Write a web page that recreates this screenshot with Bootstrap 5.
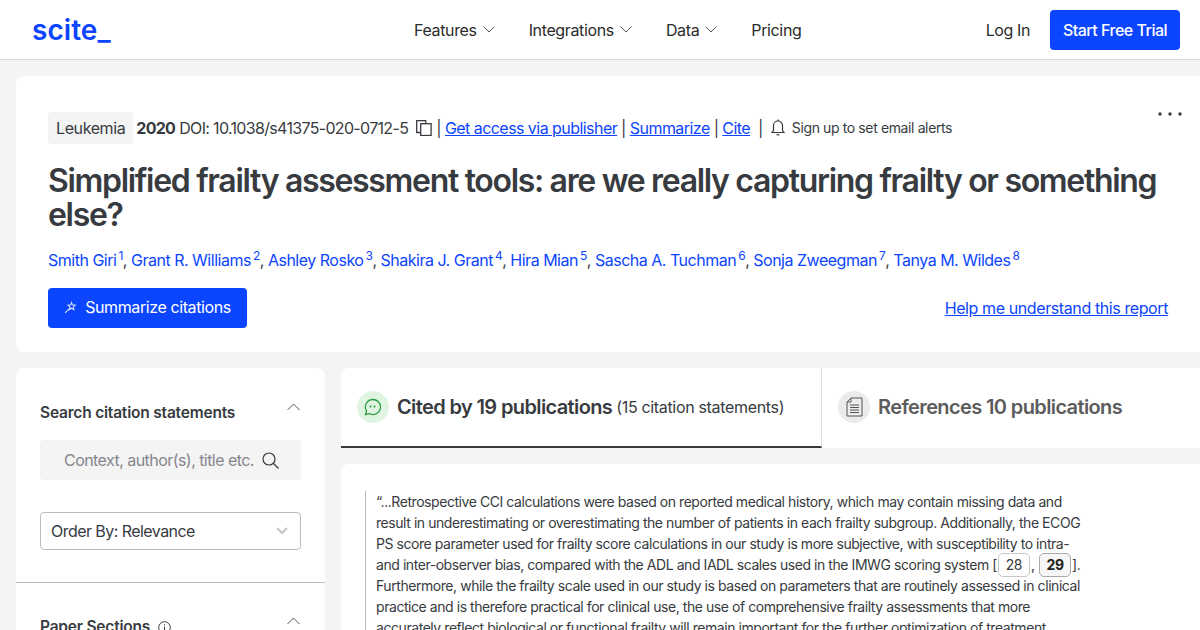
<!DOCTYPE html>
<html lang="en">
<head>
  <meta charset="UTF-8" />
  <meta name="viewport" content="width=device-width, initial-scale=1.0" />
  <title>scite report</title>
  <link rel="stylesheet" href="https://cdn.jsdelivr.net/npm/bootstrap@5.3.0/dist/css/bootstrap.min.css" />
  <style>
    html, body { height: 630px; overflow: hidden; }
    body { background: #f4f4f4; color: #373b40; font-family: Inter, "Liberation Sans", sans-serif; font-size: 16px; letter-spacing: -0.4px; }
    a { color: #0b45ff; }
    .site-nav { height: 60px; background: #fff; border-bottom: 1px solid #d9d9d9; padding: 0 20px 0 32px; }
    .logo { color: #0b45ff; font-size: 28px; font-weight: 600; letter-spacing: 0.05px; text-decoration: none; line-height: 1; width: 80px; white-space: nowrap; }
    .nav-items { gap: 34px; margin-left: 302px; letter-spacing: -0.36px; }
    .nav-items a { gap: 6px; }
    .nav-items a, .login { color: #2b2b2b; text-decoration: none; }
    .btn-scite { background: #0b45ff; color: #fff; border: 0; border-radius: 4px; font-weight: 500; font-size: 16px; letter-spacing: -0.5px; }
    .btn-scite:hover { background: #0b45ff; color: #fff; }
    .trial { height: 40px; width: 130px; padding: 0; }
    .head-card { background: #fff; margin: 16px 0 16px 16px; height: 276px; border-radius: 8px 0 0 8px; padding: 36px 32px 0; position: relative; }
    .meta { height: 32px; white-space: nowrap; }
    .journal { background: #f4f4f4; border-radius: 4px; padding: 0 8px; height: 32px; line-height: 32px; margin-right: 3px; }
    .year { letter-spacing: -0.7px; margin-right: 4px; }
    .doi { letter-spacing: -0.67px; }
    .links { letter-spacing: -0.55px; }
    .alerts { font-size: 14px; letter-spacing: -0.38px; margin: -2px 0 0 7px; }
    .more { position: absolute; top: 36px; right: 18px; }
    h1.title { font-size: 32px; line-height: 34px; font-weight: 600; letter-spacing: -1.32px; margin: 20px 0 0; color: #373b40; }
    .authors { margin-top: 16px; height: 24px; white-space: nowrap; letter-spacing: -0.49px; }
    .authors a { text-decoration: none; }
    .authors sup { font-size: 12px; color: #0b45ff; margin-left: 2px; }
    .summ { height: 40px; width: 199px; padding: 0 0 2px; font-weight: 400; letter-spacing: -0.4px; }
    .summ-row { margin-top: 16px; }
    .side { width: 309px; flex: none; background: #fff; border-radius: 8px; height: 300px; }
    .side-sec { padding: 33px 24px 32px; border-bottom: 1px solid #bdbdbd; height: 215px; }
    .side-title { font-weight: 600; font-size: 15.5px; letter-spacing: -0.2px; }
    .chev { margin: 2px 1px 0 0; }
    .search { background: #f4f4f5; border-radius: 4px; height: 40px; margin-top: 16px; color: #85868c; padding: 0 22px 0 24px; gap: 8px; letter-spacing: -0.55px; }
    .order { border: 1px solid #bdbdbd; border-radius: 4px; height: 38px; margin-top: 32px; padding: 0 12px 0 10px; letter-spacing: -0.55px; }
    .tab-row { height: 80px; background: #fff; border-radius: 8px 0 0 0; }
    .tab-cited { width: 481px; border-right: 1px solid #ddd; border-bottom: 2px solid #373b40; padding-left: 16px; }
    .tab-refs { padding: 0 0 2px 16px; color: #5c5c5c; }
    .circle { width: 32px; height: 32px; border-radius: 50%; flex: none; margin-right: 8px; }
    .tab-title { font-size: 20px; font-weight: 600; letter-spacing: -0.62px; white-space: nowrap; }
    .tab-sub { font-size: 16px; margin-left: 4px; white-space: nowrap; letter-spacing: -0.33px; }
    .cite-card { background: #fff; border-radius: 8px 0 0 0; margin-top: 16px; padding: 27px 0 0 24px; height: 200px; }
    .quote { border-left: 1px solid #bdbdbd; width: 725px; padding-left: 10px; font-size: 14px; line-height: 21px; letter-spacing: -0.44px; }
    .ref { display: inline-block; border: 1px solid #c8c8c8; border-radius: 5px; min-width: 32px; height: 24px; line-height: 22px; margin: -3px 1px; text-align: center; padding: 0 5px; font-size: 14px; vertical-align: baseline; }
    .ref-active { font-weight: 700; border-color: #a8a8a8; background: #f6f6f6; color: #222; }
  </style>
</head>
<body>
  <nav class="site-nav d-flex align-items-center">
    <a class="logo" href="#">scite_</a>
    <div class="nav-items d-flex">
      <a class="d-flex align-items-center" href="#">Features <svg width="12" height="7" viewBox="0 0 12 7"><path d="M.5.5L6 6 11.5.5" fill="none" stroke="#555"/></svg></a>
      <a class="d-flex align-items-center" href="#">Integrations <svg width="12" height="7" viewBox="0 0 12 7"><path d="M.5.5L6 6 11.5.5" fill="none" stroke="#555"/></svg></a>
      <a class="d-flex align-items-center" href="#">Data <svg width="12" height="7" viewBox="0 0 12 7"><path d="M.5.5L6 6 11.5.5" fill="none" stroke="#555"/></svg></a>
      <a class="d-flex align-items-center" href="#">Pricing</a>
    </div>
    <a class="login ms-auto me-3 pe-1" href="#">Log In</a>
    <button class="btn btn-scite trial">Start Free Trial</button>
  </nav>

  <section class="head-card">
    <div class="meta d-flex align-items-center">
      <span class="journal">Leukemia</span>
      <strong class="year">2020</strong>
      <span class="doi">DOI: 10.1038/s41375-020-0712-5</span>
      <svg class="ms-2 me-1" width="16" height="16" viewBox="0 0 16 16" fill="none" stroke="#373b40" stroke-width="1.3"><path d="M4.5 12.5H.7V.7h9v2.8"/><rect x="4.7" y="3.7" width="10.4" height="11.8"/></svg>
      <span class="links">|&nbsp;<a href="#">Get access via publisher</a> | <a href="#">Summarize</a> | <a href="#">Cite</a> &nbsp;|</span>
      <svg class="ms-2" width="14" height="18" viewBox="0 0 14 18" fill="none" stroke="#373b40" stroke-width="1.2"><path d="M1 13.5h12l-1.5-2V6.5a4.5 4.5 0 0 0-9 0v5z"/><path d="M5.5 15.8h3"/><path d="M7 .5v1.5"/></svg>
      <span class="alerts">Sign up to set email alerts</span>
    </div>
    <svg class="more" width="24" height="4" viewBox="0 0 24 4" fill="#373b40"><circle cx="2" cy="2" r="1.7"/><circle cx="12" cy="2" r="1.7"/><circle cx="22" cy="2" r="1.7"/></svg>
    <h1 class="title">Simplified frailty assessment tools: are we really capturing frailty or something else?</h1>
    <div class="authors">
      <a href="#">Smith Giri<sup>1</sup></a>, <a href="#">Grant R. Williams<sup>2</sup></a>, <a href="#">Ashley Rosko<sup>3</sup></a>, <a href="#">Shakira J. Grant<sup>4</sup></a>, <a href="#">Hira Mian<sup>5</sup></a>, <a href="#">Sascha A. Tuchman<sup>6</sup></a>, <a href="#">Sonja Zweegman<sup>7</sup></a>, <a href="#">Tanya M. Wildes<sup>8</sup></a>
    </div>
    <div class="summ-row d-flex justify-content-between align-items-center">
      <button class="btn btn-scite summ d-flex align-items-center justify-content-center gap-2">
        <svg width="13" height="13" viewBox="0 0 12 12" fill="none" stroke="#d5dfff" stroke-width="1"><path d="M1 11l4.5-4.5"/><path d="M7 1.5l.8 2 2.7.3-2 1.7.6 2.5-2.1-1.3-2 1.2.5-2.4-1.8-1.7 2.6-.3z"/></svg>
        Summarize citations
      </button>
      <a href="#">Help me understand this report</a>
    </div>
  </section>

  <div class="d-flex ms-3">
    <aside class="side">
      <div class="side-sec">
        <div class="d-flex justify-content-between align-items-start">
          <span class="side-title">Search citation statements</span>
          <svg class="chev" width="13" height="8" viewBox="0 0 13 8"><path d="M.5 7l6-6 6 6" fill="none" stroke="#555"/></svg>
        </div>
        <div class="search d-flex align-items-center justify-content-between">
          <span>Context, author(s), title etc.</span>
          <svg width="17" height="17" viewBox="0 0 17 17" fill="none" stroke="#373b40" stroke-width="1.2"><circle cx="7" cy="7" r="6"/><path d="M11.5 11.5l5 5"/></svg>
        </div>
        <div class="order d-flex align-items-center justify-content-between">
          <span>Order By: Relevance</span>
          <svg width="12" height="8" viewBox="0 0 12 8"><path d="M1 1l5 5 5-5" fill="none" stroke="#c4c4c4" stroke-width="2"/></svg>
        </div>
      </div>
      <div class="d-flex justify-content-between align-items-start px-4 pt-4 mt-2">
        <span class="side-title">Paper Sections <svg class="ms-1" width="13" height="13" viewBox="0 0 13 13" fill="none" stroke="#373b40"><circle cx="6.5" cy="6.5" r="5.8"/><path d="M6.5 5.5v4M6.5 3.2v1"/></svg></span>
        <svg class="chev" width="13" height="8" viewBox="0 0 13 8"><path d="M.5 7l6-6 6 6" fill="none" stroke="#555"/></svg>
      </div>
    </aside>
    <main class="flex-grow-1 ms-3">
      <div class="tab-row d-flex">
        <div class="tab-cited d-flex align-items-center">
          <span class="circle d-flex align-items-center justify-content-center" style="background:#e0f5e1">
            <svg width="20" height="20" viewBox="0 0 20 20" fill="none" stroke="#2f9e44" stroke-width="1.3"><path d="M10 2.5a7.5 7.5 0 1 1-3.6 14.1L2.5 17.5l1-3.6A7.5 7.5 0 0 1 10 2.5z"/><path d="M7.5 8.5v2M11.5 8.5v2" stroke-width="1.6"/></svg>
          </span>
          <span class="tab-title">Cited by 19 publications</span>
          <span class="tab-sub">(15 citation statements)</span>
        </div>
        <div class="tab-refs d-flex align-items-center">
          <span class="circle d-flex align-items-center justify-content-center" style="background:#ebebeb">
            <svg width="17" height="20" viewBox="0 0 17 20" fill="none" stroke="#555" stroke-width="1"><path d="M5 1h11v18H1V5z"/><path d="M5 1v4H1"/><path d="M4 8h9M4 10.5h9M4 13h9M4 15.5h9"/></svg>
          </span>
          <span class="tab-title">References 10 publications</span>
        </div>
      </div>
      <div class="cite-card">
        <div class="quote">“...Retrospective CCI calculations were based on reported medical history, which may contain missing data and result in underestimating or overestimating the number of patients in each frailty subgroup. Additionally, the ECOG PS score parameter used for frailty score calculations in our study is more subjective, with susceptibility to intra- and inter-observer bias, compared with the ADL and IADL scales used in the IMWG scoring system [<span class="ref">28</span>, <span class="ref ref-active">29</span>]. Furthermore, while the frailty scale used in our study is based on parameters that are routinely assessed in clinical practice and is therefore practical for clinical use, the use of comprehensive frailty assessments that more accurately reflect biological or functional frailty will remain important for the further optimization of treatment</div>
      </div>
    </main>
  </div>
  <script src="https://cdn.jsdelivr.net/npm/bootstrap@5.3.0/dist/js/bootstrap.bundle.min.js"></script>
</body>
</html>
